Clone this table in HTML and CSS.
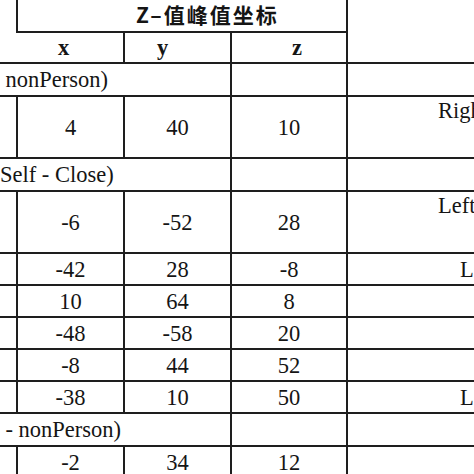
FILE: index.html
```html
<!DOCTYPE html>
<html lang="zh">
<head>
<meta charset="utf-8">
<title>Z-值峰值坐标</title>
<link rel="stylesheet" href="styles.css">
</head>
<body>
<table class="grid">
  <colgroup>
    <col class="c-label">
    <col class="c-x">
    <col class="c-y">
    <col class="c-z">
    <col class="c-region">
  </colgroup>
  <tr class="row-title">
    <td class="edge" rowspan="2"></td>
    <th class="title" colspan="3">Z–值峰值坐标</th>
    <td class="region" rowspan="2"></td>
  </tr>
  <tr class="row-head">
    <th class="axis axis-x">x</th>
    <th class="axis axis-y">y</th>
    <th class="axis axis-z">z</th>
  </tr>
  <tr class="row-section">
    <td class="section sec-a" colspan="3">nonPerson)</td>
    <td></td>
    <td class="region"></td>
  </tr>
  <tr class="row-tall">
    <td class="edge"></td>
    <td class="num">4</td>
    <td class="num">40</td>
    <td class="num">10</td>
    <td class="region region-wide">Right</td>
  </tr>
  <tr class="row-section">
    <td class="section sec-b" colspan="3">Self - Close)</td>
    <td></td>
    <td class="region"></td>
  </tr>
  <tr class="row-tall">
    <td class="edge"></td>
    <td class="num">-6</td>
    <td class="num">-52</td>
    <td class="num">28</td>
    <td class="region region-wide">Left</td>
  </tr>
  <tr class="row">
    <td class="edge"></td>
    <td class="num">-42</td>
    <td class="num">28</td>
    <td class="num">-8</td>
    <td class="region region-narrow">L</td>
  </tr>
  <tr class="row">
    <td class="edge"></td>
    <td class="num">10</td>
    <td class="num">64</td>
    <td class="num">8</td>
    <td class="region"></td>
  </tr>
  <tr class="row">
    <td class="edge"></td>
    <td class="num">-48</td>
    <td class="num">-58</td>
    <td class="num">20</td>
    <td class="region"></td>
  </tr>
  <tr class="row">
    <td class="edge"></td>
    <td class="num">-8</td>
    <td class="num">44</td>
    <td class="num">52</td>
    <td class="region"></td>
  </tr>
  <tr class="row">
    <td class="edge"></td>
    <td class="num">-38</td>
    <td class="num">10</td>
    <td class="num">50</td>
    <td class="region region-narrow">L</td>
  </tr>
  <tr class="row-section">
    <td class="section sec-c" colspan="3">- nonPerson)</td>
    <td></td>
    <td class="region"></td>
  </tr>
  <tr class="row">
    <td class="edge"></td>
    <td class="num">-2</td>
    <td class="num">34</td>
    <td class="num">12</td>
    <td class="region"></td>
  </tr>
</table>
</body>
</html>
```

FILE: styles.css
```css
html, body {
  margin: 0;
  padding: 0;
  background: #ffffff;
  overflow: hidden;
}

body {
  width: 474px;
  height: 474px;
}

.grid {
  border-collapse: collapse;
  table-layout: fixed;
  width: 547px;
  font-family: "Liberation Serif", "Times New Roman", serif;
  font-size: 22.5px;
  color: #151515;
}

.c-label { width: 17px; }
.c-x { width: 107px; }
.c-y { width: 107px; }
.c-z { width: 116px; }
.c-region { width: 200px; }

.grid td,
.grid th {
  font-family: "Liberation Serif", "Times New Roman", serif;
  border: 2px solid #1e1e1e;
  padding: 0;
  white-space: nowrap;
  overflow: visible;
  line-height: 25px;
  font-weight: 400;
}

.grid .row-title td,
.grid .row-title th {
  border-top-style: hidden;
}

.grid tr > :first-child {
  border-left-style: hidden;
}

.row-title { height: 32px; }
.row-head { height: 31px; }
.row-section { height: 33px; }
.row-tall { height: 62px; }
.row { height: 32px; }

.grid .title {
  font-family: "Noto Sans CJK SC", "DejaVu Sans", sans-serif;
  font-weight: 700;
  font-size: 21px;
  letter-spacing: 2px;
  text-align: left;
  padding-left: 118px;
  padding-bottom: 3px;
  vertical-align: middle;
}

.grid .axis {
  font-weight: 700;
  text-align: left;
  vertical-align: middle;
}

.grid .axis-x { padding-left: 41px; }
.grid .axis-y { padding-left: 32px; }
.grid .axis-z { padding-left: 60px; }

.grid .num {
  text-align: center;
  vertical-align: middle;
}

.grid .section {
  text-align: right;
  vertical-align: middle;
}

.grid .sec-a { padding-right: 122px; }
.grid .sec-b { padding-right: 120px; }
.grid .sec-c { padding-right: 109px; }

.grid .region {
  text-align: left;
  vertical-align: middle;
}

.grid .row-tall .region {
  vertical-align: top;
  padding-top: 1px;
}

.grid .region-wide { padding-left: 90px; }
.grid .region-narrow { padding-left: 112px; }
```
